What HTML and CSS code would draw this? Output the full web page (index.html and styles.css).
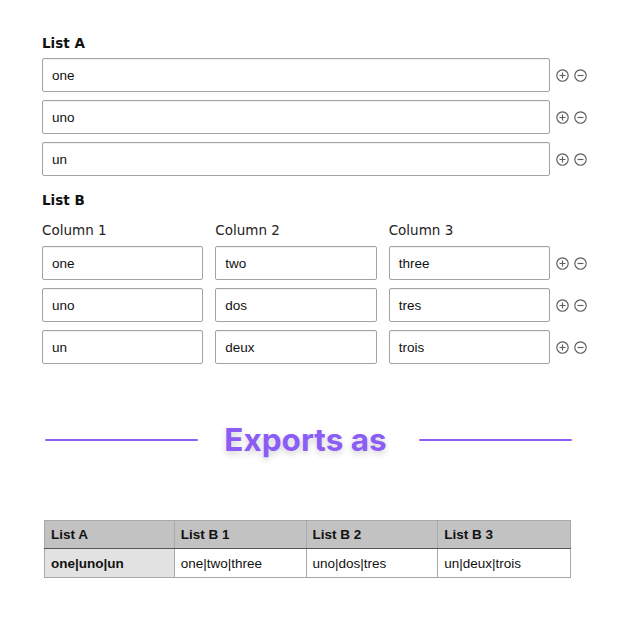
FILE: index.html
```html
<!DOCTYPE html>
<html>
<head>
<meta charset="utf-8">
<link rel="stylesheet" href="styles.css">
</head>
<body>
<div class="page">
  <div class="title first">List A</div>
  <div class="rows">
    <div class="row"><div class="input wide">one</div><div class="icons"><svg viewBox="0 0 13 13"><circle cx="6.5" cy="6.5" r="5.7"/><path d="M6.5 3.5v6M3.5 6.5h6"/></svg><svg viewBox="0 0 13 13"><circle cx="6.5" cy="6.5" r="5.7"/><path d="M3.5 6.5h6"/></svg></div></div>
    <div class="row"><div class="input wide">uno</div><div class="icons"><svg viewBox="0 0 13 13"><circle cx="6.5" cy="6.5" r="5.7"/><path d="M6.5 3.5v6M3.5 6.5h6"/></svg><svg viewBox="0 0 13 13"><circle cx="6.5" cy="6.5" r="5.7"/><path d="M3.5 6.5h6"/></svg></div></div>
    <div class="row"><div class="input wide">un</div><div class="icons"><svg viewBox="0 0 13 13"><circle cx="6.5" cy="6.5" r="5.7"/><path d="M6.5 3.5v6M3.5 6.5h6"/></svg><svg viewBox="0 0 13 13"><circle cx="6.5" cy="6.5" r="5.7"/><path d="M3.5 6.5h6"/></svg></div></div>
  </div>

  <div class="title second">List B</div>
  <div class="cols-head">
    <div class="label">Column 1</div>
    <div class="label">Column 2</div>
    <div class="label">Column 3</div>
  </div>
  <div class="rows">
    <div class="row"><div class="grid3"><div class="input">one</div><div class="input">two</div><div class="input">three</div></div><div class="icons"><svg viewBox="0 0 13 13"><circle cx="6.5" cy="6.5" r="5.7"/><path d="M6.5 3.5v6M3.5 6.5h6"/></svg><svg viewBox="0 0 13 13"><circle cx="6.5" cy="6.5" r="5.7"/><path d="M3.5 6.5h6"/></svg></div></div>
    <div class="row"><div class="grid3"><div class="input">uno</div><div class="input">dos</div><div class="input">tres</div></div><div class="icons"><svg viewBox="0 0 13 13"><circle cx="6.5" cy="6.5" r="5.7"/><path d="M6.5 3.5v6M3.5 6.5h6"/></svg><svg viewBox="0 0 13 13"><circle cx="6.5" cy="6.5" r="5.7"/><path d="M3.5 6.5h6"/></svg></div></div>
    <div class="row"><div class="grid3"><div class="input">un</div><div class="input">deux</div><div class="input">trois</div></div><div class="icons"><svg viewBox="0 0 13 13"><circle cx="6.5" cy="6.5" r="5.7"/><path d="M6.5 3.5v6M3.5 6.5h6"/></svg><svg viewBox="0 0 13 13"><circle cx="6.5" cy="6.5" r="5.7"/><path d="M3.5 6.5h6"/></svg></div></div>
  </div>
</div>

<div class="exports">
  <div class="line"></div>
  <div class="exports-text">Exports as</div>
  <div class="line"></div>
</div>

<table class="result">
  <thead>
    <tr><th class="c1">List A</th><th class="c2">List B 1</th><th class="c3">List B 2</th><th class="c4">List B 3</th></tr>
  </thead>
  <tbody>
    <tr><td class="keycell">one|uno|un</td><td>one|two|three</td><td>uno|dos|tres</td><td>un|deux|trois</td></tr>
  </tbody>
</table>
</body>
</html>
```

FILE: styles.css
```css
html, body {
  margin: 0;
  padding: 0;
  background: #ffffff;
}

.page {
  padding: 34px 0 0 42px;
}

.title {
  font-family: "DejaVu Sans", sans-serif;
  font-weight: bold;
  font-size: 13.5px;
  line-height: 18px;
  color: #111;
  height: 18px;
}

.title.first {
  margin-bottom: 6px;
}

.title.second {
  margin-top: 15px;
  margin-bottom: 12px;
}

.cols-head {
  display: grid;
  grid-template-columns: repeat(3, 1fr);
  column-gap: 12px;
  width: 508px;
  margin-bottom: 7px;
}

.label {
  font-family: "DejaVu Sans", sans-serif;
  font-size: 13.5px;
  line-height: 18px;
  color: #222;
}

.rows {
  display: flex;
  flex-direction: column;
  gap: 8px;
}

.row {
  display: flex;
  align-items: center;
}

.grid3 {
  display: grid;
  grid-template-columns: repeat(3, 1fr);
  column-gap: 12px;
  width: 508px;
}

.input {
  box-sizing: border-box;
  height: 34px;
  border: 1px solid #a3a3a3;
  border-radius: 2px;
  box-shadow: inset 0 1px 1px rgba(0, 0, 0, 0.06);
  background: #fff;
  font-family: "Liberation Sans", Arial, sans-serif;
  font-size: 13.5px;
  line-height: 32px;
  padding: 1px 0 0 9px;
  color: #111;
}

.input.wide {
  width: 508px;
}

.icons {
  display: flex;
  gap: 5px;
  margin-left: 6px;
}

.icons svg {
  width: 13px;
  height: 13px;
  fill: none;
  stroke: #5f5f5f;
  stroke-width: 1.15;
}

.exports {
  display: flex;
  align-items: center;
  width: 527px;
  margin: 56px 0 0 45px;
  height: 40px;
}

.line {
  width: 153px;
  height: 2px;
  border-radius: 1px;
  background: #8b5cf6;
}

.exports-text {
  flex: 1;
  text-align: center;
  font-family: Inter, "Noto Sans", sans-serif;
  font-weight: 700;
  font-size: 31.5px;
  letter-spacing: 0;
  color: #8b5cf6;
  text-shadow: 0 3px 6px rgba(0, 0, 0, 0.18);
  line-height: 40px;
  padding-right: 6px;
}

.result {
  border-collapse: collapse;
  margin: 60px 0 0 44px;
  width: 527px;
  font-family: "Liberation Sans", Arial, sans-serif;
  font-size: 13.5px;
  color: #111;
}

.result th,
.result td {
  border: 1px solid #a9a9a9;
  text-align: left;
  padding: 0 6px;
}

.result th {
  background: #c2c2c2;
  font-weight: bold;
  height: 27px;
  border-bottom: 1px solid #555;
}

.result td {
  height: 28px;
  background: #fff;
}

.result td.keycell {
  background: #e2e2e2;
  font-weight: bold;
}

.c1 { width: 117px; }
.c2 { width: 119px; }
.c3 { width: 119px; }
.c4 { width: 120px; }
```
